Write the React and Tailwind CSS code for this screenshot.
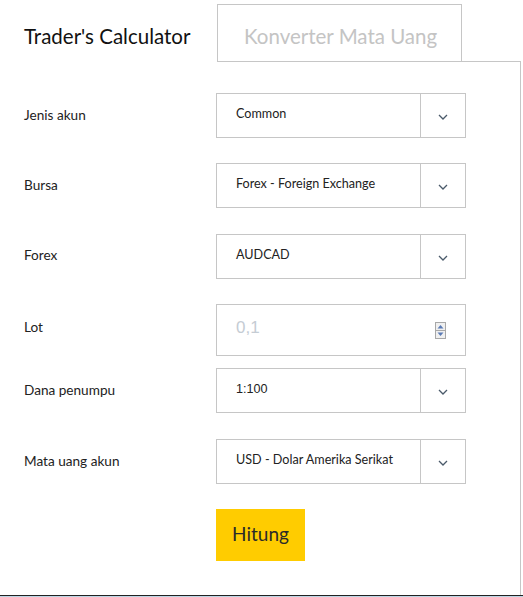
import React from 'react'

const font = { fontFamily: 'Lato, "Open Sans", sans-serif' }

const Chevron = () => (
    <svg width="10" height="6" viewBox="0 0 10 6" className="block">
        <polyline points="1,1 5,5 9,1" fill="none" stroke="#4a5a6a" strokeWidth="1.3" />
    </svg>
)

const Spinner = () => (
    <svg width="11" height="17" viewBox="0 0 11 17" className="block">
        <rect x="0.5" y="0.5" width="10" height="16" fill="#f0f0f0" stroke="#a8a8a8" />
        <line x1="0.5" y1="8.5" x2="10.5" y2="8.5" stroke="#a8a8a8" />
        <polygon points="2.5,6.5 5.5,3 8.5,6.5" fill="#5b7bb5" />
        <polygon points="2.5,10.5 5.5,14 8.5,10.5" fill="#5b7bb5" />
    </svg>
)

const SelectBox = ({ value, arial }) => (
    <div className="flex w-[250px] h-[45px] border border-[#c6c6c6] bg-white">
        <div
            className="flex-1 flex items-center pl-[19px] pb-[3px] text-[12.6px] text-[#222]"
            style={arial ? { fontFamily: '"Liberation Sans", Arial, sans-serif' } : font}
        >
            {value}
        </div>
        <div className="w-[45px] flex items-center justify-center border-l border-[#c6c6c6] pt-[2px]">
            <Chevron />
        </div>
    </div>
)

const Row = ({ label, mt, shift = 0, children }) => (
    <div className="flex items-center" style={{ marginTop: mt }}>
        <div className="w-[192px] text-[13.6px] text-[#222]" style={{ ...font, marginTop: shift }}>{label}</div>
        {children}
    </div>
)

export default function App() {
    return (
        <div className="w-[523px] h-[597px] bg-white overflow-hidden relative" style={font}>
            {/* tabs */}
            <div className="flex h-[62px] w-[521px]">
                <div className="w-[217px] flex items-center pl-[24px] pt-[10px] text-[20.5px] text-[#111]">
                    Trader's Calculator
                </div>
                <div className="w-[245px] mt-[4px] border border-[#c6c6c6] flex items-center pl-[26px] pt-[6px] text-[20.5px] text-[#c4c4c4]">
                    Konverter Mata Uang
                </div>
                <div className="flex-1 border-b border-[#c6c6c6]" />
            </div>

            {/* form panel */}
            <div className="flex w-[521px] h-[535px]">
                <div className="flex-1 pl-[24px]">
                    <Row label="Jenis akun" mt={31}>
                        <SelectBox value="Common" />
                    </Row>
                    <Row label="Bursa" mt={25}>
                        <SelectBox value="Forex - Foreign Exchange" />
                    </Row>
                    <Row label="Forex" mt={26} shift={-2}>
                        <SelectBox value="AUDCAD" />
                    </Row>
                    <Row label="Lot" mt={25} shift={-6}>
                        <div className="flex items-center w-[250px] h-[52px] border border-[#c6c6c6] pl-[19px] pr-[19px] pb-[4px]">
                            <div className="flex-1 text-[17px] text-[#c5ccd4]" style={{ fontFamily: '"Liberation Sans", Arial, sans-serif' }}>
                                0,1
                            </div>
                            <div className="pt-[4px]">
                                <Spinner />
                            </div>
                        </div>
                    </Row>
                    <Row label="Dana penumpu" mt={12}>
                        <SelectBox value="1:100" arial />
                    </Row>
                    <Row label="Mata uang akun" mt={26}>
                        <SelectBox value="USD - Dolar Amerika Serikat" />
                    </Row>
                    <div className="ml-[192px] mt-[25px]">
                        <button className="w-[89px] h-[52px] bg-[#ffcc00] text-[19px] text-[#2a2a2a] pb-[2px]" style={font}>
                            Hitung
                        </button>
                    </div>
                </div>
                <div className="w-px bg-[#c6c6c6]" />
            </div>
            <div className="absolute left-0 bottom-0 w-full h-[2px] border-t border-[#222] bg-[#bcd6e4]" />
        </div>
    )
}
